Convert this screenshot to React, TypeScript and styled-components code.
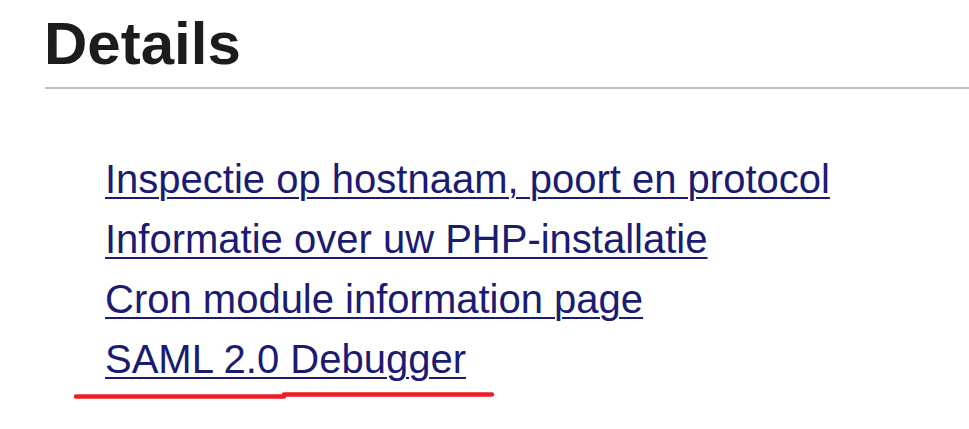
import React from "react";
import styled, { createGlobalStyle } from "styled-components";

const Global = createGlobalStyle`
  html, body { margin: 0; padding: 0; background: #ffffff; }
  body { font-family: "Liberation Sans", Arial, sans-serif; }
`;

const Page = styled.main`
  padding: 9px 0 0 45px;
`;

const Heading = styled.h1`
  margin: 0 0 0 -1px;
  font-size: 60px;
  line-height: 69px;
  font-weight: 700;
  color: #1c1c1c;
`;

const Rule = styled.hr`
  margin: 9px 0 0 0;
  border: 0;
  height: 2px;
  background: #c0c0c0;
`;

const LinkList = styled.ul`
  list-style: none;
  margin: 60px 0 0 0;
  padding: 0 0 0 60px;
`;

const Item = styled.li`
  font-size: 40px;
  line-height: 60px;
`;

const Link = styled.a`
  color: #1b1b72;
  text-decoration: underline;
  text-decoration-thickness: 2px;
  text-underline-offset: 4px;
`;

const Annotation = styled.svg`
  display: block;
  margin: 2px 0 0 27px;
`;

const links = [
  "Inspectie op hostnaam, poort en protocol",
  "Informatie over uw PHP-installatie",
  "Cron module information page",
  "SAML 2.0 Debugger",
];

export default function App() {
  return (
    <>
      <Global />
      <Page>
        <Heading>Details</Heading>
        <Rule />
        <LinkList>
          {links.map((l) => (
            <Item key={l}>
              <Link href="#">{l}</Link>
            </Item>
          ))}
        </LinkList>
        <Annotation width="424" height="10" viewBox="0 0 424 10">
          <path d="M4 5.5 H212" stroke="#ee1c25" strokeWidth="4.5" strokeLinecap="round" />
          <path d="M212 3.5 H420" stroke="#ee1c25" strokeWidth="4.5" strokeLinecap="round" />
        </Annotation>
      </Page>
    </>
  );
}
